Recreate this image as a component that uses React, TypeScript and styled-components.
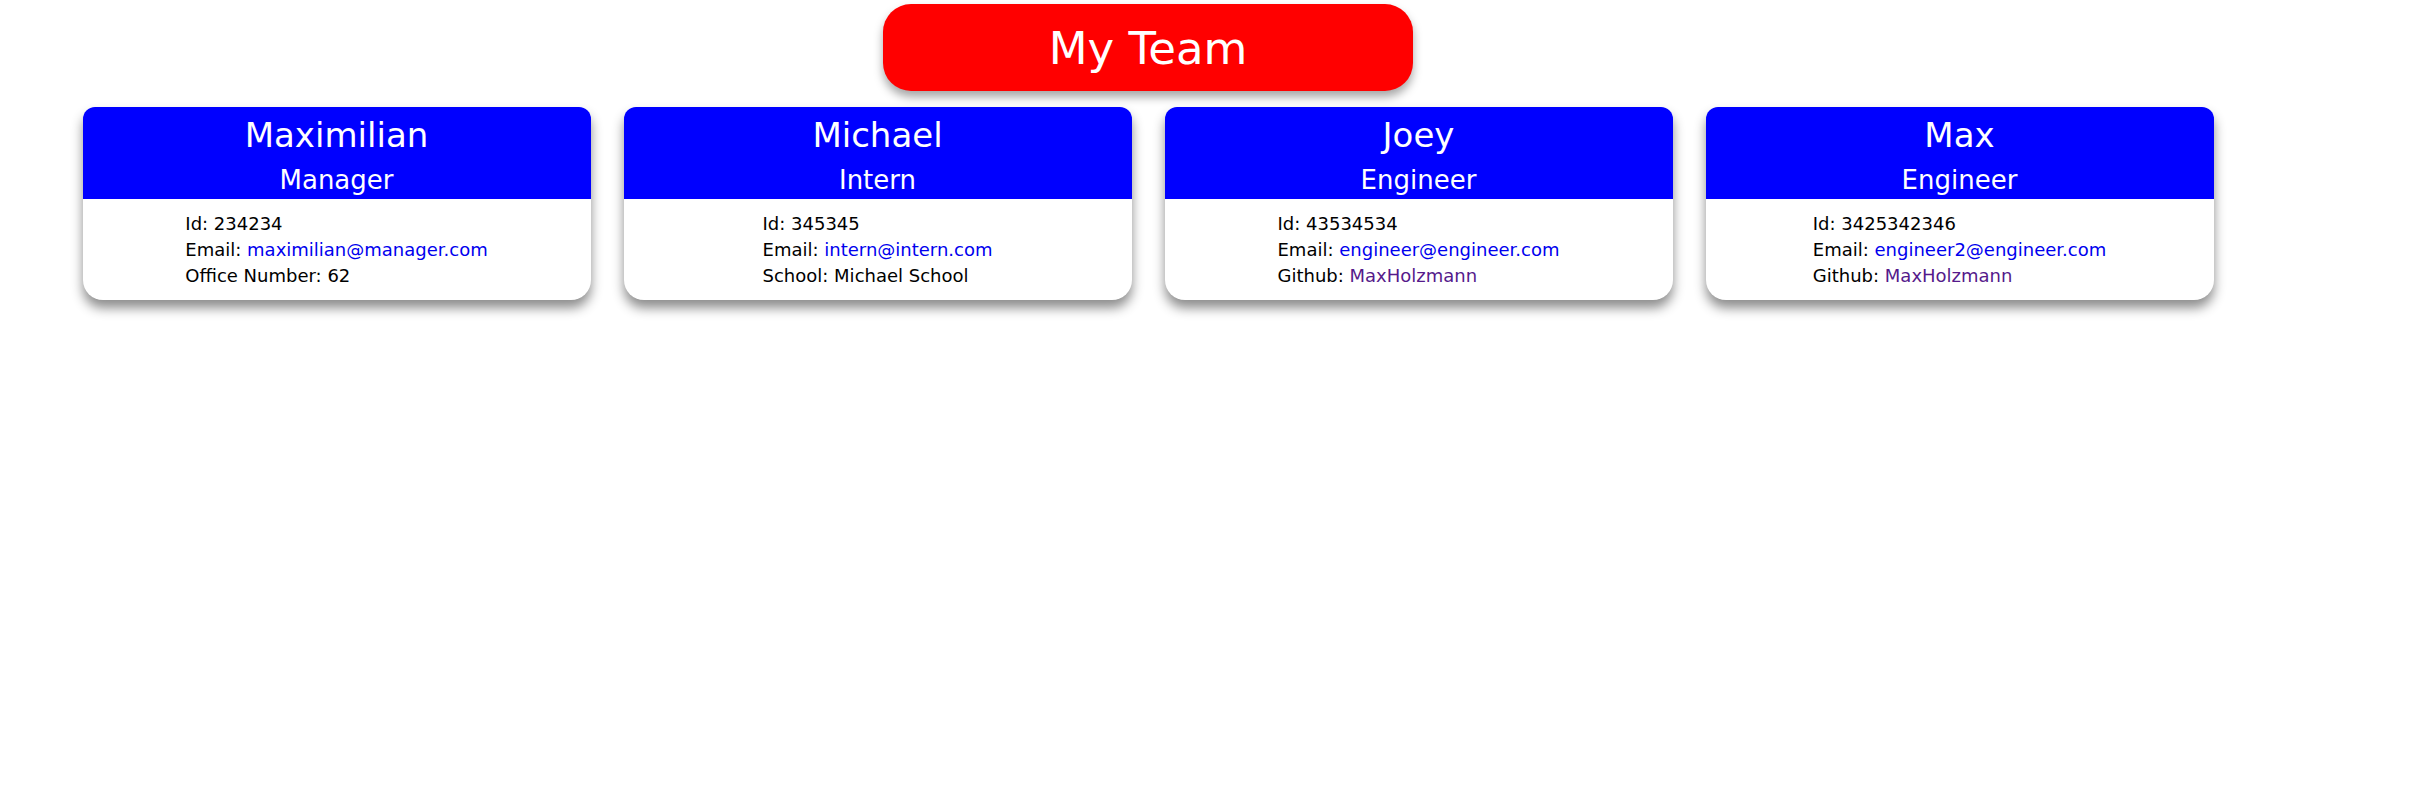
import React from 'react';
import styled, { createGlobalStyle } from 'styled-components';

const GlobalStyle = createGlobalStyle`
  html, body {
    margin: 0;
    padding: 0;
    background: #ffffff;
  }
  body {
    font-family: "DejaVu Sans", "Liberation Sans", sans-serif;
    color: #000000;
  }
`;

type Member = {
  name: string;
  role: string;
  id: string;
  email: string;
  extraLabel: string;
  extraValue: string;
  extraLink?: boolean;
};

const team: Member[] = [
  {
    name: 'Maximilian',
    role: 'Manager',
    id: '234234',
    email: 'maximilian@manager.com',
    extraLabel: 'Office Number',
    extraValue: '62',
  },
  {
    name: 'Michael',
    role: 'Intern',
    id: '345345',
    email: 'intern@intern.com',
    extraLabel: 'School',
    extraValue: 'Michael School',
  },
  {
    name: 'Joey',
    role: 'Engineer',
    id: '43534534',
    email: 'engineer@engineer.com',
    extraLabel: 'Github',
    extraValue: 'MaxHolzmann',
    extraLink: true,
  },
  {
    name: 'Max',
    role: 'Engineer',
    id: '3425342346',
    email: 'engineer2@engineer.com',
    extraLabel: 'Github',
    extraValue: 'MaxHolzmann',
    extraLink: true,
  },
];

const Page = styled.div`
  width: 2296px;
  min-height: 100vh;
  box-sizing: border-box;
  display: flex;
  flex-direction: column;
  align-items: center;
  gap: 16px;
  padding-top: 4px;
`;

const Title = styled.h1`
  margin: 0;
  width: 530px;
  height: 87px;
  box-sizing: border-box;
  padding-top: 8px;
  line-height: 73px;
  border-radius: 28px;
  background-color: #ff0000;
  color: #ffffff;
  font-size: 45px;
  font-weight: 400;
  text-align: center;
  box-shadow: 0 6px 10px rgba(0, 0, 0, 0.35);
`;

const CardRow = styled.div`
  display: flex;
  justify-content: center;
  gap: 33px;
`;

const Card = styled.section`
  width: 508px;
  height: 193px;
  border-radius: 12px 12px 20px 20px;
  background-color: #ffffff;
  box-shadow: 0 8px 12px rgba(0, 0, 0, 0.45);
  display: flex;
  flex-direction: column;
`;

const CardHead = styled.header`
  height: 92px;
  flex-shrink: 0;
  box-sizing: border-box;
  padding-top: 8px;
  border-radius: 12px 12px 0 0;
  background-color: #0000ff;
  color: #ffffff;
  text-align: center;
`;

const Name = styled.h2`
  margin: 0;
  font-size: 34px;
  font-weight: 400;
  line-height: 40px;
`;

const Role = styled.h3`
  margin: 9px 0 0;
  font-size: 26px;
  font-weight: 400;
  line-height: 33px;
`;

const CardBody = styled.div`
  display: flex;
  justify-content: center;
  padding-top: 12px;
`;

const InfoList = styled.ul`
  margin: 0;
  padding: 0;
  list-style: none;
`;

const InfoItem = styled.li`
  font-size: 18px;
  line-height: 26px;
  white-space: nowrap;
`;

const InfoLink = styled.a<{ $visited?: boolean }>`
  color: ${(p) => (p.$visited ? '#551a8b' : '#0000ee')};
  text-decoration: none;
`;

export default function App() {
  return (
    <>
      <GlobalStyle />
      <Page>
        <Title>My Team</Title>
        <CardRow>
          {team.map((m) => (
            <Card key={m.email}>
              <CardHead>
                <Name>{m.name}</Name>
                <Role>{m.role}</Role>
              </CardHead>
              <CardBody>
                <InfoList>
                  <InfoItem>Id: {m.id}</InfoItem>
                  <InfoItem>
                    Email: <InfoLink href={`mailto:${m.email}`}>{m.email}</InfoLink>
                  </InfoItem>
                  <InfoItem>
                    {m.extraLabel}:{' '}
                    {m.extraLink ? (
                      <InfoLink $visited href={`#${m.extraValue}`}>
                        {m.extraValue}
                      </InfoLink>
                    ) : (
                      m.extraValue
                    )}
                  </InfoItem>
                </InfoList>
              </CardBody>
            </Card>
          ))}
        </CardRow>
      </Page>
    </>
  );
}
